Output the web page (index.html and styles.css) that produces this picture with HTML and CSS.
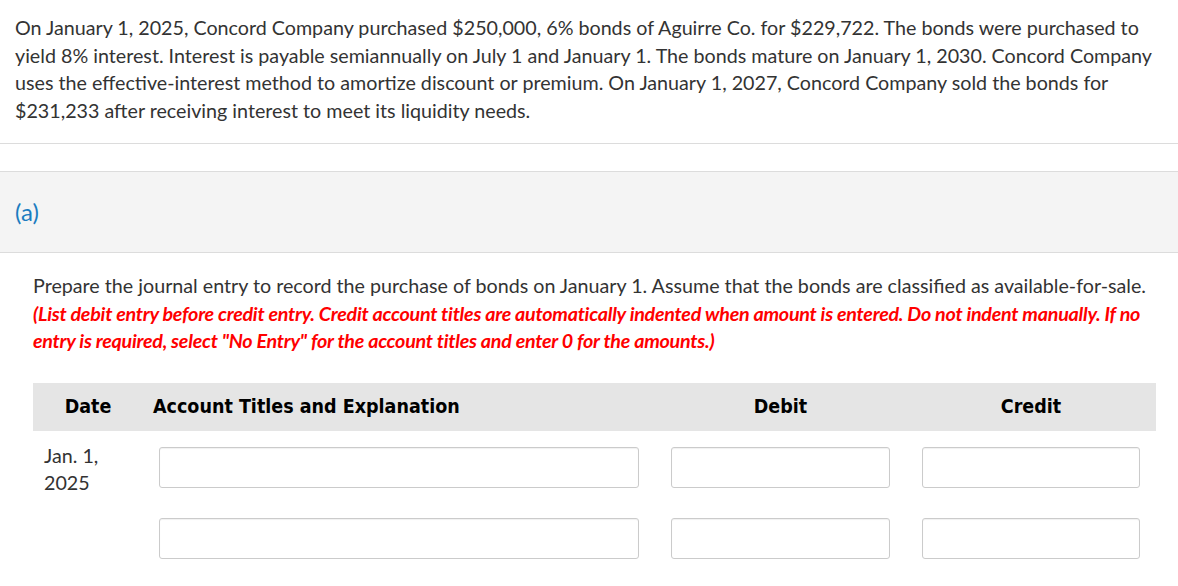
FILE: index.html
```html
<!DOCTYPE html>
<html lang="en">
<head>
<meta charset="utf-8">
<title>Bond purchase journal entry</title>
<link rel="stylesheet" href="styles.css">
</head>
<body>
<div class="intro">
  <p>On January 1, 2025, Concord Company purchased $250,000, 6% bonds of Aguirre Co. for $229,722. The bonds were purchased to yield 8% interest. Interest is payable semiannually on July 1 and January 1. The bonds mature on January 1, 2030. Concord Company uses the effective-interest method to amortize discount or premium. On January 1, 2027, Concord Company sold the bonds for $231,233 after receiving interest to meet its liquidity needs.</p>
</div>
<div class="spacer"></div>
<div class="part-head">(a)</div>
<div class="part-body">
  <p class="prompt">Prepare the journal entry to record the purchase of bonds on January 1. Assume that the bonds are classified as available-for-sale.
    <span class="note">(List debit entry before credit entry. Credit account titles are automatically indented when amount is entered. Do not indent manually. If no entry is required, select "No Entry" for the account titles and enter 0 for the amounts.)</span></p>

  <div class="journal">
    <div class="jrow jhead">
      <div class="hcell c-date">Date</div>
      <div class="hcell c-acct">Account Titles and Explanation</div>
      <div class="hcell c-num">Debit</div>
      <div class="hcell c-num">Credit</div>
    </div>
    <div class="jrow first">
      <div class="dcell">Jan. 1,<br>2025</div>
      <div class="cell"><input class="field" type="text"></div>
      <div class="cell"><input class="field" type="text"></div>
      <div class="cell"><input class="field" type="text"></div>
    </div>
    <div class="jrow">
      <div class="dcell"></div>
      <div class="cell"><input class="field" type="text"></div>
      <div class="cell"><input class="field" type="text"></div>
      <div class="cell"><input class="field" type="text"></div>
    </div>
  </div>
</div>
</body>
</html>
```

FILE: styles.css
```css
* { box-sizing: border-box; }

html, body {
  margin: 0;
  padding: 0;
  background: #fff;
}

body {
  font-family: Lato, "Open Sans", "Liberation Sans", sans-serif;
  font-size: 19.7px;
  line-height: 27.5px;
  color: #333;
}

p { margin: 0; }

.intro {
  padding: 14px 10px 19px 15px;
  border-bottom: 1px solid #dcdcdc;
}

.spacer {
  height: 27px;
}

.part-head {
  background: #f4f4f4;
  border-top: 1px solid #dcdcdc;
  border-bottom: 1px solid #dcdcdc;
  height: 82px;
  padding: 26px 15px 0 15px;
  font-size: 24px;
  line-height: 28px;
  color: #1b7cc0;
}

.part-body {
  padding: 19px 10px 0 33px;
}

.prompt {
  color: #333;
}

.note {
  display: block;
  color: #f00;
  font-weight: 700;
  font-style: italic;
  letter-spacing: -0.25px;
}

.journal {
  margin-top: 28px;
  width: 1123px;
}

.jrow {
  display: grid;
  grid-template-columns: 110px 512px 251px 250px;
}

.jhead {
  background: #e5e5e5;
  height: 48px;
  align-items: center;
}

.hcell {
  font-family: "DejaVu Sans Condensed", "DejaVu Sans", sans-serif;
  font-stretch: condensed;
  font-size: 19.5px;
  font-weight: 700;
  color: #000;
  line-height: 24px;
}

.c-date { text-align: center; }
.c-acct { padding-left: 10px; }
.c-num { text-align: center; }

.dcell {
  padding: 11px 11px 0 11px;
  line-height: 27px;
  color: #333;
}

.cell {
  padding: 15px 16px;
}

.jrow.first .cell {
  padding-top: 16px;
}

.field {
  display: block;
  width: 100%;
  height: 41px;
  border: 1px solid #cbcbcb;
  border-radius: 3px;
  background: #fff;
  box-shadow: inset 0 1px 1px rgba(0, 0, 0, 0.06);
  font: inherit;
  padding: 0 8px;
  margin: 0;
}
```
